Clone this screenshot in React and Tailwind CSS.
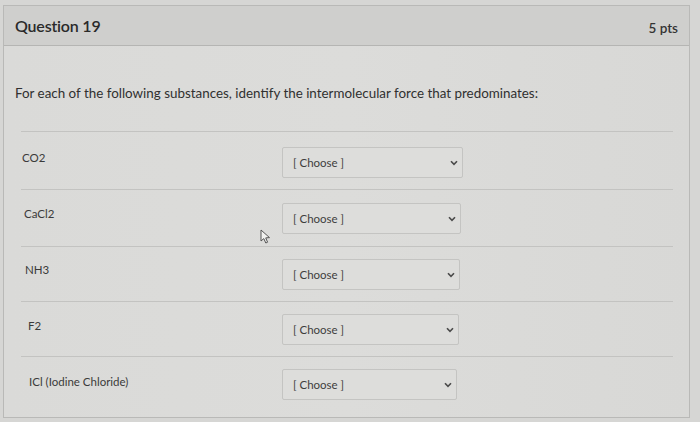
import React from "react";

const rows = [
  { label: "CO2", h: "h-[58px]", pl: "pl-[1px]", st: "pt-[15px]", lt: "pt-[17px]", sw: "w-[181px]" },
  { label: "CaCl2", h: "h-[57px]", pl: "pl-[3px]", st: "pt-[13px]", lt: "pt-[15px]", sw: "w-[179px]" },
  { label: "NH3", h: "h-[55px]", pl: "pl-[4px]", st: "pt-[12px]", lt: "pt-[14px]", sw: "w-[178px]" },
  { label: "F2", h: "h-[55px]", pl: "pl-[7px]", st: "pt-[12px]", lt: "pt-[15px]", sw: "w-[177px]" },
  { label: "ICl (Iodine Chloride)", h: "h-[56px]", pl: "pl-[8px]", st: "pt-[12px]", lt: "pt-[16px]", sw: "w-[175px]" },
];

function Chevron() {
  return (
    <svg width="8" height="6" viewBox="0 0 8 6" className="shrink-0">
      <path d="M1 1.2 L4 4.4 L7 1.2" fill="none" stroke="#4a4a4a" strokeWidth="1.6" />
    </svg>
  );
}

function Cursor() {
  return (
    <svg width="12" height="16" viewBox="0 0 12 16" className="absolute left-[260px] top-[229px]">
      <path d="M1 1 L1 12 L3.8 9.6 L5.8 14 L7.6 13.2 L5.7 8.9 L9.5 8.6 Z" fill="#f2f2f0" stroke="#555" strokeWidth="1" strokeLinejoin="round" />
    </svg>
  );
}

export default function App() {
  return (
    <div
      className="relative w-[700px] h-[422px] overflow-hidden bg-[#d6d6d4] pt-[5px]"
      style={{ fontFamily: "Lato, 'Open Sans', sans-serif" }}
    >
      <div className="ml-[3px] w-[687px] h-[413px] border border-[#b9b9b7] flex flex-col text-[#333]">
        <div className="h-[40px] shrink-0 bg-[#cfcfcd] border-b border-[#b5b5b3] flex items-center justify-between pl-[11px] pr-[11px]">
          <span className="text-[16px] font-semibold tracking-[-0.2px] text-[#2a2a2a]">Question 19</span>
          <span className="text-[13.5px] font-semibold text-[#333] pt-[5px]">5 pts</span>
        </div>
        <div className="flex-1 bg-gradient-to-r from-[#dadad8] via-[#dcdcda] to-[#d8d8d6] flex flex-col">
          <div className="h-[85px] shrink-0 pl-[11px] pt-[37px] text-[13.4px] text-[#303030]">
            For each of the following substances, identify the intermolecular force that predominates:
          </div>
          <div className="ml-[17px] mr-[16px] border-t border-[#c3c3c1]">
            {rows.map((r, i) => (
              <div
                key={r.label}
                className={`${r.h} flex ${i < rows.length - 1 ? "border-b border-[#c3c3c1]" : ""}`}
              >
                <div className={`w-[261px] shrink-0 ${r.pl} ${r.lt} text-[11.5px] text-[#3a3a3a]`}>
                  {r.label}
                </div>
                <div className={r.st}>
                  <div
                    className={`${r.sw} h-[31px] border border-[#c4c4c2] rounded-[2px] bg-[#dddddb] flex items-center justify-between pl-[10px] pr-[4px]`}
                  >
                    <span className="text-[11.5px] text-[#3d3d3d]">[ Choose ]</span>
                    <Chevron />
                  </div>
                </div>
              </div>
            ))}
          </div>
        </div>
      </div>
      <Cursor />
    </div>
  );
}
